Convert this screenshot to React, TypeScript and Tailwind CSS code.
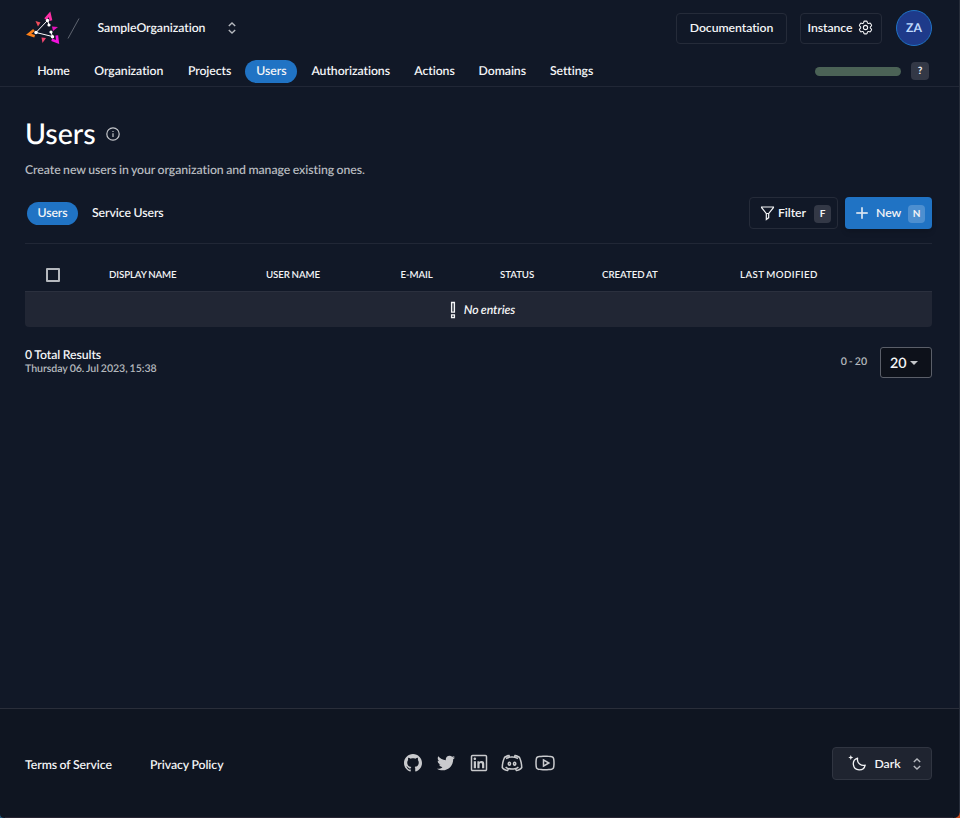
import type { ReactNode } from "react";
import {
  LiaFilterSolid,
  LiaGithub,
  LiaTwitter,
  LiaLinkedin,
  LiaDiscord,
  LiaYoutube,
  LiaPlusSolid,
  LiaExclamationSolid,
} from "react-icons/lia";
import { HiOutlineCog6Tooth } from "react-icons/hi2";

const navItems = [
  { label: "Home", width: "w-[54px]" },
  { label: "Organization", width: "w-[90px]" },
  { label: "Projects", width: "w-[65px]" },
  { label: "Users", width: "w-[52px]" },
  { label: "Authorizations", width: "w-[100px]" },
  { label: "Actions", width: "w-[61px]" },
  { label: "Domains", width: "w-[68px]" },
  { label: "Settings", width: "w-[64px]" },
];

const columns = [
  { label: "Display Name", width: "w-[157px] tracking-[-0.1px]" },
  { label: "User Name", width: "w-[134.5px] tracking-[-0.1px]" },
  { label: "E-Mail", width: "w-[99.5px] tracking-[-0.1px]" },
  { label: "Status", width: "w-[102px]" },
  { label: "Created At", width: "w-[138px] tracking-[-0.05px]" },
  { label: "Last Modified", width: "w-[192px] tracking-[0.4px]" },
];

function Logo() {
  return (
    <svg width="35" height="35" viewBox="0 0 35 35" fill="none">
      <path d="M19.3 8.2 23.6 3.4 25 9.6" stroke="#fb2fa4" strokeWidth="2.7" />
      <path d="M8 19 2.8 23.2 8.7 25.2" stroke="#fb7f18" strokeWidth="2.7" />
      <path d="M30.8 24.3 31.6 31 25.7 28.8" stroke="#f312dc" strokeWidth="2.7" />
      <path d="M9.5 10 14.5 11.5 12 15.5Z" fill="#ef4d5c" />
      <path d="M26 15.5 32 16 27 20Z" fill="#e512bc" />
      <path d="M15.5 26.5 20 27 16.5 32Z" fill="#ef4770" />
      <path d="M23 14 21.5 9.5 10 21.5 26.5 25.5 25 21" stroke="#fff" strokeWidth="1" />
      <g fill="#fff">
        <circle cx="21.5" cy="9.5" r="1.7" />
        <circle cx="23" cy="14" r="1.6" />
        <circle cx="10" cy="21.5" r="1.7" />
        <circle cx="26.5" cy="25.8" r="1.7" />
        <circle cx="25" cy="21" r="1.6" />
      </g>
    </svg>
  );
}

function UpDown({ className }: { className?: string }) {
  return (
    <svg width="8" height="12" viewBox="0 0 8 12" fill="none" stroke="currentColor" strokeWidth="1.4" className={className}>
      <path d="M0.8 4 4 1 7.2 4M0.8 8 4 11 7.2 8" />
    </svg>
  );
}

function Key({ children, className }: { children: ReactNode; className: string }) {
  return (
    <span className={`flex h-[18px] items-center justify-center rounded text-[10px] font-bold ${className}`}>{children}</span>
  );
}

function Header() {
  return (
    <header className="h-[87px] border-b border-[#212736]">
      <div className="flex h-14 items-center pl-[26px] pr-7">
        <Logo />
        <svg width="13" height="21" viewBox="0 0 13 21" className="ml-[6px] text-[#606571]" stroke="currentColor">
          <path d="M1 20.5 12 0.5" />
        </svg>
        <span className="ml-[17.5px] w-[109px] whitespace-nowrap">SampleOrganization</span>
        <UpDown className="ml-[21px] text-[#b5b8be]" />
        <div className="ml-auto flex items-center">
          <button className="h-[31px] w-[111px] rounded border border-[#252b39]">Documentation</button>
          <button className="ml-[13px] flex h-[31px] w-[82px] items-center justify-center gap-[5px] rounded border border-[#252b39]">
            Instance
            <HiOutlineCog6Tooth className="mb-[2px] size-[17px]" />
          </button>
          <div className="ml-[14px] flex size-9 items-center justify-center rounded-full border border-[#2073c4] bg-[#1e3a8a] font-bold text-[#bfdbfe]">
            ZA
          </div>
        </div>
      </div>
      <div className="flex h-[30px] items-center pl-[26.5px] pr-[31px]">
        <nav className="flex gap-[3.3px]">
          {navItems.map((item) => (
            <a
              key={item.label}
              className={`flex h-[23px] items-center justify-center whitespace-nowrap rounded-full pt-px ${item.width} ${
                item.label === "Users" ? "bg-[#2073c4]" : ""
              }`}
            >
              {item.label}
            </a>
          ))}
        </nav>
        <div className="ml-auto h-[9px] w-[86px] rounded-full bg-[#4b6256] blur-[0.6px]" />
        <Key className="ml-[10px] w-[18px] bg-[#333846]">?</Key>
      </div>
    </header>
  );
}

function Toolbar() {
  return (
    <div className="mt-[17px] flex h-[47px] items-start border-b border-[#212736]">
      <div className="flex h-8 items-center pl-[2px]">
        <span className="flex h-[23px] w-[51px] items-center justify-center rounded-full bg-[#2073c4] pt-px">Users</span>
        <span className="ml-[14px] pt-px">Service Users</span>
      </div>
      <div className="ml-auto flex">
        <button className="flex h-8 w-[89px] items-center rounded border border-[#252b39] pl-2">
          <LiaFilterSolid className="size-[19px]" />
          <span className="w-[37px] pl-px pt-px text-left">Filter</span>
          <Key className="mt-px w-[17px] bg-[#333846]">F</Key>
        </button>
        <button className="ml-[7px] flex h-8 w-[87px] items-center rounded bg-[#2073c4] pl-[9px] shadow-md">
          <LiaPlusSolid className="size-4 stroke-1" />
          <span className="ml-[6px] w-8 pt-px text-left">New</span>
          <Key className="mt-px w-[17px] bg-[#4d8fd0]">N</Key>
        </button>
      </div>
    </div>
  );
}

function UsersTable() {
  return (
    <div className="mt-[15px]">
      <div className="flex h-8 items-center text-[9.7px] uppercase">
        <div className="w-[84px] pl-[21px]">
          <div className="size-[14px] rounded-[1px] border-2 border-[#b5b8be]" />
        </div>
        {columns.map((column) => (
          <div key={column.label} className={column.width}>
            {column.label}
          </div>
        ))}
      </div>
      <div className="flex h-9 items-center justify-center rounded-b border-t border-[#2b303e] bg-[#212634] italic">
        <LiaExclamationSolid className="size-[22px]" />
        <span className="pt-[2px]">No entries</span>
      </div>
    </div>
  );
}

function Paginator() {
  return (
    <div className="mt-5 flex items-start">
      <div className="pt-[1px]">
        <p className="leading-[14px]">0 Total Results</p>
        <p className="text-[10.6px] leading-[14px] text-[#b5b8be]">Thursday 06. Jul 2023, 15:38</p>
      </div>
      <span className="ml-auto mr-[13px] pt-[7.5px] text-[10.6px] text-[#b5b8be]">0 - 20</span>
      <div className="flex h-[31px] w-[52px] items-center rounded-[3px] border border-[#5b5f69] bg-[#0d111a] pl-[9px] text-[14.3px]">
        <span className="pt-[3px]">20</span>
        <svg width="8" height="4" viewBox="0 0 8 4" fill="#c4c6ca" className="ml-1">
          <path d="M0 0H8L4 4Z" />
        </svg>
      </div>
    </div>
  );
}

function Footer() {
  return (
    <footer className="flex h-[110px] items-center border-t border-[#2a2e3a] bg-[#0f1521] px-[25px] pr-7">
      <a className="w-[125px] pt-[3px]">Terms of Service</a>
      <a className="pt-[3px]">Privacy Policy</a>
      <div className="mb-px ml-auto mr-[275px] flex gap-[9px] text-[24px] text-[#c9cacd]">
        <LiaGithub />
        <LiaTwitter />
        <LiaLinkedin />
        <LiaDiscord />
        <LiaYoutube />
      </div>
      <button className="flex h-[33px] w-[100px] items-center rounded border border-[#303541] bg-[#1f2430] pl-[15px]">
        <svg width="19" height="17" viewBox="0 0 19 17" fill="none" stroke="currentColor" strokeWidth="1.3">
          <path d="M9.6 3.2A6 6 0 1 0 17.2 10.2C13.5 11.2 8.5 8.3 9.6 3.2Z" strokeLinejoin="round" />
          <path d="M2.8 0 3.5 1.8 5.3 2.5 3.5 3.2 2.8 5 2.1 3.2 0.3 2.5 2.1 1.8Z" fill="currentColor" stroke="none" />
        </svg>
        <span className="ml-[7.5px] pt-[2px]">Dark</span>
        <UpDown className="ml-auto mr-[10px] text-[#b5b8be]" />
      </button>
    </footer>
  );
}

export default function App() {
  return (
    <div className="relative flex h-[818px] w-[960px] flex-col overflow-hidden bg-[#111827] font-[Lato,sans-serif] text-[12.25px] font-semibold tracking-[-0.06px] text-[#f3f4f6] [text-rendering:geometricPrecision] [word-spacing:-0.5px]">
      <Header />
      <main className="flex-1 pl-[25px] pr-7 pt-[27px]">
        <div className="flex h-10 items-center">
          <h1 className="text-[28.6px] font-medium text-white">Users</h1>
          <svg width="14" height="14" viewBox="0 0 14 14" fill="none" stroke="#c4c6ca" strokeWidth="1.2" className="ml-[10px]">
            <circle cx="7" cy="7" r="6.2" />
            <path d="M7 6.2V10M7 3.9V5.1" />
          </svg>
        </div>
        <p className="mt-[6px] leading-5 text-[#b5b8be]">Create new users in your organization and manage existing ones.</p>
        <Toolbar />
        <UsersTable />
        <Paginator />
      </main>
      <Footer />
      <div className="absolute right-0 top-0 h-full w-px bg-[#272d3a]" />
      <svg width="960" height="8" viewBox="0 0 960 8" className="absolute bottom-0 left-0">
        <path d="M0 4Q0 8 5 8H0Z" fill="#245a80" />
        <path d="M960 2Q959 8 953 8H960Z" fill="#c24a1d" />
        <path d="M5 7.5H953" stroke="#272432" />
      </svg>
    </div>
  );
}
